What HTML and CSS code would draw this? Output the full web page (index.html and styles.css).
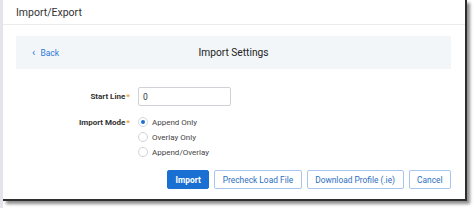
FILE: index.html
```html
<!DOCTYPE html>
<html lang="en">
<head>
  <meta charset="UTF-8">
  <title>Import/Export</title>
  <link rel="stylesheet" href="styles.css">
</head>
<body>

<div class="backdrop">
  <div class="modal">
    <div class="modal-header">Import/Export</div>

    <div class="modal-body">
      <div class="subheader">
        <a href="#" class="back-link"><span class="chev">&lsaquo;</span> Back</a>
        <div class="subheader-title">Import Settings</div>
      </div>

      <div class="form-row">
        <label class="form-label">Start Line<span class="req">*</span></label>
        <input type="text" class="text-input" value="0">
      </div>

      <div class="form-row radio-row">
        <label class="form-label">Import Mode<span class="req">*</span></label>
        <div class="radio-group">
          <label class="radio"><span class="dot checked"></span>Append Only</label>
          <label class="radio"><span class="dot"></span>Overlay Only</label>
          <label class="radio"><span class="dot"></span>Append/Overlay</label>
        </div>
      </div>

      <div class="actions">
        <button class="btn primary">Import</button>
        <button class="btn">Precheck Load File</button>
        <button class="btn">Download Profile (.ie)</button>
        <button class="btn">Cancel</button>
      </div>
    </div>
  </div>
</div>

</body>
</html>
```

FILE: styles.css
```css
* {
  box-sizing: border-box;
}

body {
  margin: 0;
  padding: 0;
  font-family: Roboto, 'Liberation Sans', Arial, sans-serif;
  background-color: white;
  width: 474px;
  height: 208px;
  overflow: hidden;
}

.backdrop {
  border-left: 3px solid #e4e5ea;
  width: 474px;
  height: 208px;
}

.modal {
  width: 464px;
  height: 201px;
  background-color: white;
  border-right: 2px solid #2e2e30;
  border-bottom: 2px solid #2e2e30;
  box-shadow: 3px 3px 3px rgba(0, 0, 0, 0.45);
  display: flex;
  flex-direction: column;
}

.modal-header {
  height: 25px;
  padding: 6px 0 0 13px;
  font-size: 10.5px;
  color: #333;
  border-bottom: 1px solid #ececef;
}

.modal-body {
  padding: 11px 14px 0 13px;
}

.subheader {
  height: 33px;
  background-color: #f3f6f9;
  display: flex;
  align-items: center;
  position: relative;
  padding-left: 16px;
}

.back-link {
  color: #2d7ad6;
  font-size: 8.5px;
  text-decoration: none;
}

.chev {
  font-size: 11px;
  margin-right: 3px;
}

.subheader-title {
  position: absolute;
  left: 0;
  right: 0;
  text-align: center;
  font-size: 10.2px;
  color: #222;
  pointer-events: none;
}

.form-row {
  display: flex;
  align-items: center;
  gap: 8px;
  margin-top: 18px;
}

.form-label {
  width: 114px;
  text-align: right;
  font-size: 8px;
  font-weight: bold;
  color: #333;
}

.req {
  color: #f0a030;
  margin-left: 1px;
}

.text-input {
  width: 93px;
  height: 19px;
  border: 1px solid #cfd3d8;
  border-radius: 2px;
  padding: 0 4px;
  font-size: 8.5px;
  font-family: inherit;
  color: #333;
}

.radio-row {
  align-items: flex-start;
  margin-top: 10px;
}

.radio-row .form-label {
  margin-top: 2px;
}

.radio-group {
  display: flex;
  flex-direction: column;
  gap: 3px;
}

.radio {
  display: flex;
  align-items: center;
  font-size: 8px;
  color: #444;
  height: 12px;
}

.dot {
  width: 10px;
  height: 10px;
  border: 1px solid #d0d4d9;
  border-radius: 50%;
  margin-right: 4px;
  background-color: white;
  position: relative;
}

.dot.checked {
  border-color: #cfd8e3;
}

.dot.checked::after {
  content: '';
  position: absolute;
  left: 2px;
  top: 2px;
  width: 4px;
  height: 4px;
  border-radius: 50%;
  background-color: #1c6fd1;
}

.actions {
  display: flex;
  justify-content: flex-end;
  gap: 5px;
  margin-top: 12px;
}

.btn {
  height: 19px;
  padding: 0 7.5px;
  font-size: 8.4px;
  font-family: inherit;
  border: 1px solid #a9c7ee;
  border-radius: 2px;
  background-color: white;
  color: #2d6fc0;
  cursor: pointer;
}

.btn.primary {
  background-color: #1a6fd3;
  border-color: #1a6fd3;
  color: white;
  font-weight: bold;
}
```
